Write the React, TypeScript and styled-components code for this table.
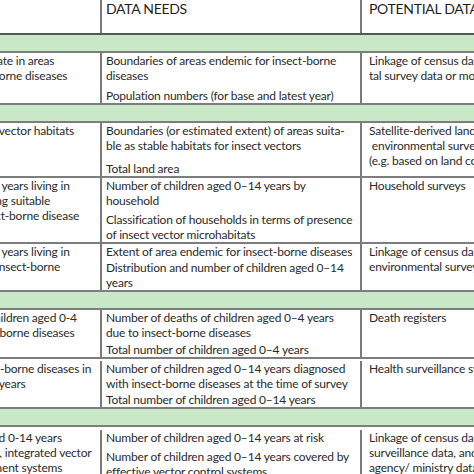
import React from "react";
import styled, { createGlobalStyle } from "styled-components";

const GlobalStyle = createGlobalStyle`
  html, body {
    margin: 0;
    padding: 0;
    background: #ffffff;
  }
`;

const Viewport = styled.div`
  width: 474px;
  height: 474px;
  overflow: hidden;
  background: #ffffff;
`;

const Table = styled.div`
  display: flex;
  flex-direction: column;
  margin-left: -92px;
  width: 760px;
  font-family: Lato, "Open Sans", sans-serif;
  font-size: 12px;
  letter-spacing: -0.2px;
  color: #2b2b2b;
`;

const Row = styled.div<{ $header?: boolean; $gap?: number; $top?: number }>`
  display: grid;
  grid-template-columns: 194px 260px 1fr;
  border-bottom: 2px solid ${(p) => (p.$header ? "#555555" : "#7d7d7d")};
  min-height: ${(p) => (p.$header ? "33px" : "0")};
  padding-top: ${(p) => p.$top ?? 0}px;

  --para-gap: ${(p) => p.$gap ?? 5}px;
`;

const Cell = styled.div<{ $pad: number; $last?: boolean }>`
  padding-left: ${(p) => p.$pad}px;
  border-right: ${(p) => (p.$last ? "none" : "2px solid #7a7a7a")};
  overflow: hidden;
`;

const HeadText = styled.div`
  font-size: 14px;
  line-height: 17px;
  letter-spacing: -0.3px;
  white-space: nowrap;
  color: #1f1f1f;
`;

const Section = styled.div`
  height: 16px;
  background: #c9e8c7;
  border-bottom: 2px solid #7d7d7d;
`;

const Para = styled.div`
  & + & {
    margin-top: var(--para-gap);
  }
`;

const Line = styled.div`
  line-height: 15px;
  white-space: nowrap;
`;

type Block = string[][];

interface DataRow {
  indicator: Block;
  needs: Block;
  sources: Block;
  sectionBefore?: boolean;
  gap: number;
  top?: number;
}

const rows: DataRow[] = [
  {
    sectionBefore: true,
    gap: 5,
    indicator: [["Population estimate in areas", "prone to insect-borne diseases"]],
    needs: [
      ["Boundaries of areas endemic for insect-borne", "diseases"],
      ["Population numbers (for base and latest year)"],
    ],
    sources: [["Linkage of census data with environmen-", "tal survey data or modelled estimates"]],
  },
  {
    sectionBefore: true,
    gap: 8,
    indicator: [["Extents of insect vector habitats"]],
    needs: [
      ["Boundaries (or estimated extent) of areas suita-", "ble as stable habitats for insect vectors"],
      ["Total land area"],
    ],
    sources: [
      ["Satellite-derived land cover data and", "\u00a0environmental surveys", "(e.g. based on land cover classification)"],
    ],
  },
  {
    gap: 4,
    indicator: [["Youth aged 0–14 years living in", "households lacking suitable", "covers from insect-borne disease"]],
    needs: [
      ["Number of children aged 0–14 years by", "household"],
      ["Classification of households in terms of presence", "of insect vector microhabitats"],
    ],
    sources: [["Household surveys"]],
  },
  {
    gap: 1,
    indicator: [["Youth aged 0–14 years living in", "area endemic to insect-borne", "diseases"]],
    needs: [
      ["Extent of area endemic for insect-borne diseases"],
      ["Distribution and number of children aged 0–14", "years"],
    ],
    sources: [["Linkage of census data and", "environmental surveys"]],
  },
  {
    sectionBefore: true,
    gap: 2,
    indicator: [["Deaths among children aged 0-4", "caused by insect-borne diseases"]],
    needs: [
      ["Number of deaths of children aged 0–4 years", "due to insect-borne diseases"],
      ["Total number of children aged 0–4 years"],
    ],
    sources: [["Death registers"]],
  },
  {
    gap: 1,
    top: 2,
    indicator: [["Burdens of insect-borne diseases in", "youth aged 0-14 years"]],
    needs: [
      ["Number of children aged 0–14 years diagnosed", "with insect-borne diseases at the time of survey"],
      ["Total number of children aged 0–14 years"],
    ],
    sources: [["Health surveillance systems"]],
  },
  {
    sectionBefore: true,
    gap: 4,
    top: 3,
    indicator: [["% of children aged 0-14 years", "through effective, integrated vector", "control/management systems"]],
    needs: [
      ["Number of children aged 0–14 years at risk"],
      ["Number of children aged 0–14 years covered by", "effective vector control systems"],
    ],
    sources: [["Linkage of census data, health", "surveillance data, and", "agency/ ministry data"]],
  },
];

function BlockText({ block }: { block: Block }) {
  return (
    <>
      {block.map((para, i) => (
        <Para key={i}>
          {para.map((line, j) => (
            <Line key={j}>{line}</Line>
          ))}
        </Para>
      ))}
    </>
  );
}

export default function App() {
  return (
    <Viewport>
      <GlobalStyle />
      <Table>
        <Row $header>
          <Cell $pad={4}>
            <HeadText>INDICATOR</HeadText>
          </Cell>
          <Cell $pad={4}>
            <HeadText>DATA NEEDS</HeadText>
          </Cell>
          <Cell $pad={7} $last>
            <HeadText>POTENTIAL DATA SOURCES</HeadText>
          </Cell>
        </Row>
        {rows.map((row, i) => (
          <React.Fragment key={i}>
            {row.sectionBefore && <Section />}
            <Row $gap={row.gap} $top={row.top}>
              <Cell $pad={4}>
                <BlockText block={row.indicator} />
              </Cell>
              <Cell $pad={4}>
                <BlockText block={row.needs} />
              </Cell>
              <Cell $pad={7} $last>
                <BlockText block={row.sources} />
              </Cell>
            </Row>
          </React.Fragment>
        ))}
      </Table>
    </Viewport>
  );
}
